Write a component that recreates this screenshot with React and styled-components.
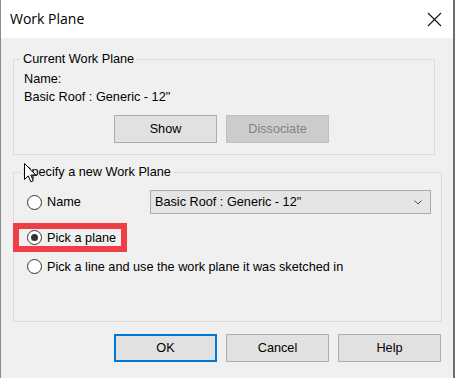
import React from "react";
import styled, { createGlobalStyle } from "styled-components";

const Global = createGlobalStyle`
  html, body { margin: 0; padding: 0; background: #f0f0f0; }
  * { box-sizing: border-box; }
`;

const Window = styled.div`
  position: relative;
  width: 455px;
  height: 378px;
  display: flex;
  flex-direction: column;
  border-left: 1px solid #8c8c8c;
  border-right: 2px solid #6e6e6e;
  background: #f0f0f0;
  font-family: "Liberation Sans", Arial, sans-serif;
  font-size: 12.7px;
  color: #000;
  overflow: hidden;
`;

const TitleBar = styled.div`
  height: 38px;
  flex: none;
  background: #fff;
  display: flex;
  align-items: center;
  justify-content: space-between;
  padding: 0 11px 0 9px;
`;

const Title = styled.span`
  font-family: "Open Sans", "Noto Sans", sans-serif;
  font-size: 14px;
  color: #000;
  margin-top: -1px;
`;

const CloseButton = styled.button`
  width: 16px;
  height: 16px;
  padding: 0;
  border: 0;
  background: transparent;
  display: flex;
  align-items: center;
  justify-content: center;
`;

const Body = styled.div`
  flex: 1;
  display: flex;
  flex-direction: column;
  padding: 0 12px 0 12px;
`;

const GroupBox = styled.fieldset`
  margin: ${(p) => p.$top}px 0 0 0;
  padding: 0;
  width: ${(p) => p.$width}px;
  border: 1px solid #dcdcdc;
  min-width: 0;
`;

const Legend = styled.legend`
  margin-left: 7px;
  padding: 0 2px;
  font-size: 12.7px;
  line-height: 15px;
`;

const GroupContent = styled.div`
  display: flex;
  flex-direction: column;
  padding: ${(p) => p.$pad};
`;

const TextLine = styled.div`
  line-height: 18px;
  white-space: nowrap;
`;

const ButtonRow = styled.div`
  display: flex;
  gap: 9px;
  margin-top: ${(p) => p.$top || 0}px;
  padding-left: ${(p) => p.$left || 0}px;
  justify-content: ${(p) => p.$justify || "flex-start"};
`;

const Button = styled.button`
  width: 103px;
  height: 28px;
  padding: 0;
  font-family: "Liberation Sans", Arial, sans-serif;
  font-size: 12.7px;
  color: ${(p) => (p.disabled ? "#838383" : "#000")};
  background: ${(p) => (p.disabled ? "#cccccc" : "#e1e1e1")};
  border: ${(p) =>
    p.$default ? "2px solid #0078d7" : p.disabled ? "1px solid #bfbfbf" : "1px solid #adadad"};
  border-radius: 0;
`;

const Row = styled.div`
  display: flex;
  align-items: center;
  justify-content: space-between;
  height: ${(p) => p.$height}px;
  margin-top: ${(p) => p.$top || 0}px;
`;

const RadioLabel = styled.label`
  display: inline-flex;
  align-items: center;
  gap: 5px;
  height: 17px;
  white-space: nowrap;
  ${(p) =>
    p.$highlight &&
    `
    padding: 0 5px 0 8px;
    margin-left: -8px;
    outline: 6px solid #ef3e47;
  `}
`;

const RadioCircle = styled.span`
  width: 15px;
  height: 15px;
  flex: none;
  border-radius: 50%;
  border: 1px solid #333;
  background: #fff;
  display: flex;
  align-items: center;
  justify-content: center;
  &::after {
    content: "";
    width: 7px;
    height: 7px;
    border-radius: 50%;
    background: ${(p) => (p.$checked ? "#333" : "transparent")};
  }
`;

const Combo = styled.div`
  width: 281px;
  height: 24px;
  background: #e5e5e5;
  border: 1px solid #acacac;
  display: flex;
  align-items: center;
  justify-content: space-between;
  padding: 0 8px 0 4px;
`;

const Cursor = styled.svg`
  position: absolute;
  left: 23px;
  top: 163px;
  pointer-events: none;
`;

function Radio({ checked, children, highlight }) {
  return (
    <RadioLabel $highlight={highlight}>
      <RadioCircle $checked={checked} />
      <span>{children}</span>
    </RadioLabel>
  );
}

export default function App() {
  return (
    <>
      <Global />
      <Window>
        <TitleBar>
          <Title>Work Plane</Title>
          <CloseButton aria-label="Close">
            <svg width="15" height="15" viewBox="0 0 15 15">
              <path d="M1 1 L14 14 M14 1 L1 14" stroke="#111" strokeWidth="1.1" fill="none" />
            </svg>
          </CloseButton>
        </TitleBar>
        <Body>
          <GroupBox $top={14} $width={422}>
            <Legend>Current Work Plane</Legend>
            <GroupContent $pad="3px 10px 11px 10px">
              <TextLine>Name:</TextLine>
              <TextLine>Basic Roof : Generic - 12"</TextLine>
              <ButtonRow $top={9} $left={90}>
                <Button>Show</Button>
                <Button disabled>Dissociate</Button>
              </ButtonRow>
            </GroupContent>
          </GroupBox>
          <GroupBox $top={10} $width={429}>
            <Legend>Specify a new Work Plane</Legend>
            <GroupContent $pad="10px 10px 46px 13px">
              <Row $height={24}>
                <Radio>Name</Radio>
                <Combo>
                  <span>Basic Roof : Generic - 12"</span>
                  <svg width="8" height="5" viewBox="0 0 8 5">
                    <path d="M0.5 0.5 L4 4 L7.5 0.5" stroke="#555" strokeWidth="1" fill="none" />
                  </svg>
                </Combo>
              </Row>
              <Row $height={17} $top={15}>
                <Radio checked highlight>
                  Pick a plane
                </Radio>
              </Row>
              <Row $height={17} $top={12}>
                <Radio>Pick a line and use the work plane it was sketched in</Radio>
              </Row>
            </GroupContent>
          </GroupBox>
          <ButtonRow $top={12} $justify="flex-end">
            <Button $default>OK</Button>
            <Button>Cancel</Button>
            <Button>Help</Button>
          </ButtonRow>
        </Body>
        <Cursor width="13" height="20" viewBox="0 0 13 20">
          <path
            d="M0.5 0.5 L0.5 16.5 L4.3 12.9 L6.9 18.8 L9.3 17.8 L6.8 12 L11.8 12 Z"
            fill="#fff"
            stroke="#000"
            strokeWidth="1"
            strokeLinejoin="miter"
          />
        </Cursor>
      </Window>
    </>
  );
}
